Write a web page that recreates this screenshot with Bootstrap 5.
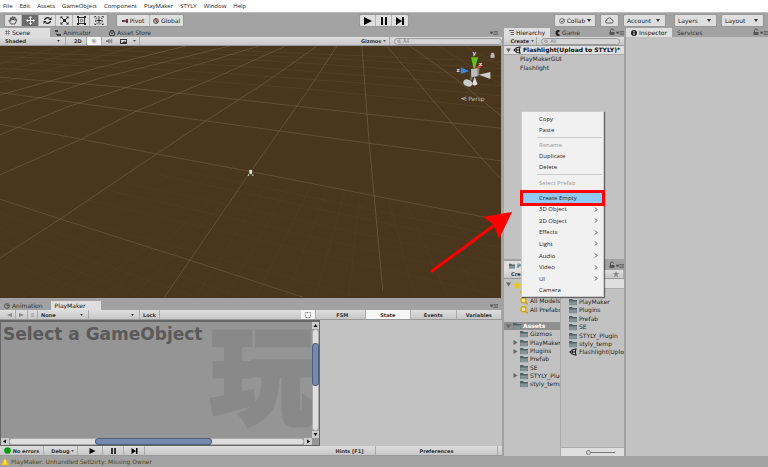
<!DOCTYPE html>
<html lang="en">
<head>
<meta charset="utf-8">
<meta name="viewport" content="width=device-width, initial-scale=1">
<title>Unity Editor</title>
<link href="https://cdn.jsdelivr.net/npm/bootstrap@5.3.0/dist/css/bootstrap.min.css" rel="stylesheet">
<style>
:root{--ui:"DejaVu Sans","Liberation Sans",sans-serif;--os:"Open Sans","Noto Sans",sans-serif}
body{font-family:var(--ui);font-size:6px;line-height:8px;color:#222;background:#a2a2a2;overflow:hidden}
button,select,input{font:inherit;color:inherit;border:0;padding:0;margin:0;background:none;border-radius:0;min-width:0;line-height:8px;white-space:nowrap}
select{appearance:none;background:no-repeat right 5px center/4px 3px url("data:image/svg+xml,%3Csvg xmlns='http://www.w3.org/2000/svg' viewBox='0 0 4 3'%3E%3Cpath d='M0 0h4L2 3z' fill='%23333'/%3E%3C/svg%3E")}
svg{display:block;flex:none}
.ic{width:8px;height:8px}
.menubar{background:#fff;height:12px;font-family:var(--os);color:#222;padding-left:3px;gap:7px}
.menubar a{color:inherit;text-decoration:none}
.toolbar-main{display:grid;grid-template-columns:1fr auto 1fr;height:16px;border-top:1px solid #bbb;padding:0 5px}
.tools{gap:10px}
.raised{background-color:#dedede;height:11px;border-radius:1px;box-shadow:0 0 0 1px #8a8a8a66;overflow:hidden}
.raised>button{display:flex;align-items:center;justify-content:center;height:11px;width:17px;border-right:1px solid #b4b4b4}
.raised>button:last-child{border-right:0}
.raised>button.on{background:#6c6c6c;color:#fff}
.raised.play>button{width:16px}
.raised>button.wide{width:33px;gap:2px}
.raised>button.collab{width:40px;gap:2px}
select.raised{padding:0 3px;width:41px}
.account-tools{gap:6px}
.workspace{display:grid;grid-template-columns:502fr 120fr 142fr;column-gap:2px;min-height:0}
.workspace>*{min-width:0;min-height:0}
.tabs-row{height:9px;color:#3a3a3a}
.tabs-row button{height:9px;padding:0 5px;display:flex;align-items:center;gap:2px;color:#333}
.tabs-row button.on{background:#dedede;color:#111}
.tabs-row button.scene-tab{padding-right:20px}
.strip{height:9px;background:linear-gradient(#dedede,#c6c6c6);font-size:5px;font-weight:bold;border-bottom:1px solid #999;color:#333}
.lower .strip{height:10px}
.strip>*{height:8px;display:flex;align-items:center;justify-content:center;border-right:1px solid #aaa}
.lower .strip>*{height:9px}
.strip select{display:block;padding-left:5px;text-align:left;background-size:3px 2px}
.strip .on{background:#f6f6f6}
.strip .tight{padding:0 3px}
.strip .key{width:21px}
.searchbox{border:1px solid #999!important;border-radius:5px;background:#d4d4d4;height:7px!important;padding:0 2px;color:#888;gap:1px}
.searchbox input{width:100%;font-size:5px;line-height:5px;height:5px;font-weight:normal}
.searchbox input::placeholder{color:#777;opacity:1}
.pane{background:#c2c2c2}
.scene{background:#49361d;flex:252 1 0;min-height:0;margin:0 1px 0 0}
.lower{flex:155 1 0;min-height:0;margin-top:3px}
.pm{display:grid;grid-template-columns:320fr 182fr;min-height:0}
.graph{background:#959595;border:1px solid #666;border-top-width:2px;display:grid;grid-template:1fr 7px/1fr 7px;min-height:0}
.graph-view{overflow:hidden;min-width:0;min-height:0}
.graph-title{font-size:17px;line-height:20px;font-weight:bold;color:#5a5a5a;margin:2px 0 0 2px;white-space:nowrap}
.glyph{position:absolute;right:-6px;top:-9px;font:900 108px/112px "Noto Sans CJK JP","Noto Sans CJK SC",sans-serif;color:#898989;-webkit-text-stroke:3px #898989}
.track-v,.track-h{background:#dedede;border:1px solid #aaa;border-radius:3px}
.thumb{background:#7489ab;border:1px solid #4d5f7d;border-radius:3px}
.tabs4{display:grid;grid-template-columns:repeat(4,1fr)}
.hier{flex:232 1 0;min-height:0}
.proj{flex:195 1 0;min-height:0;margin-top:2px}
.scene-name{height:9px;background:#dedede;font-weight:bold;font-size:6px;color:#111;padding-left:2px;gap:2px;border-bottom:1px solid #aaa}
.rows{display:grid;grid-auto-rows:1fr}
.rows>div{display:flex;align-items:center;gap:2px;white-space:nowrap;overflow:hidden;padding-left:16px;min-height:0}
.rows>.arrow{padding-left:9px}
.rows>.top{padding-left:2px}
.hrows{min-height:17px}
.tree{min-height:108px;border-right:1px solid #aaa;padding-top:1px;overflow:hidden}
.tree-rows{min-height:108px}
.tree .sel{background:#8f8f8f;color:#fff;font-weight:bold}
.files{min-height:67px}
.files>div{padding-left:8px}
.crumb{height:10px;background:#dedede;border-bottom:1px solid #aaa}
.split{display:grid;grid-template-columns:57fr 63fr}
.sizer{height:9px;background:#dedede;border-top:1px solid #aaa;padding-right:9px}
input[type=range]{appearance:none;width:29px;height:5px}
input[type=range]::-webkit-slider-runnable-track{height:1px;background:#777}
input[type=range]::-webkit-slider-thumb{appearance:none;width:5px;height:5px;margin-top:-2px;border-radius:50%;background:#ddd;border:1px solid #777}
.ctx{position:absolute;left:17px;top:83px;width:83px;background:#f1f1f1;border:1px solid #ccc;box-shadow:1px 1px 1px #0007;font-family:var(--os);padding-top:1px;z-index:5}
.ctx .group{display:grid;grid-auto-rows:1fr}
.ctx button{display:flex;align-items:center;justify-content:space-between;padding:0 5px 0 17px;text-align:left}
.ctx button:disabled{color:#999}
.ctx hr{margin:1px 1px 1px 15px;border-color:#ccc;opacity:1}
.g2{min-height:23px}.g3{min-height:34px}.g1{min-height:13px}.g9{min-height:104px}
.ctx .pick{background:#91c9f7;outline:3px solid #f00;outline-offset:-1px;z-index:1}
.pointer{position:absolute;left:-92px;top:99px;width:84px;height:64px}
.status{height:11px;color:#4d4719;padding-left:1px;gap:2px}
</style>
<script src="https://cdn.jsdelivr.net/npm/bootstrap@5.3.0/dist/js/bootstrap.bundle.min.js"></script>
</head>
<body class="vh-100 d-flex flex-column">
<svg width="0" height="0" class="position-absolute" aria-hidden="true">
<symbol id="folder" viewBox="0 0 8 8"><path d="M0 1h3l1 1h4v5H0z" fill="#52646a"/><path d="M0 3.500h8L7.500 7.300H.3z" fill="#82949a"/></symbol>
<symbol id="unity" viewBox="0 0 8 8"><path d="M7 1 4.200 1.500 1 4l3.200 2.500L7 7l-.8-3zM4 4h3M4 4 2.600 1.700M4 4 2.600 6.300" fill="none" stroke="#222" stroke-width="1.100"/></symbol>
<symbol id="lock" viewBox="0 0 8 8"><path d="M1.500 4h5v3h-5z" fill="#555"/><path d="M2.500 4V2.500a1.500 1.500 0 0 1 3 0" fill="none" stroke="#555"/></symbol>
<symbol id="opts" viewBox="0 0 8 8"><path d="M0 4h3L1.500 6zM3.500 3.500H8M3.500 5H8M3.500 6.500H8" fill="#555" stroke="#555" stroke-width=".7"/></symbol>
<symbol id="find" viewBox="0 0 8 8"><circle cx="3" cy="3.500" r="2" fill="none" stroke="#777"/><path d="m4.500 5 2 2" stroke="#777"/></symbol>
<symbol id="gold" viewBox="0 0 8 8"><circle cx="3.500" cy="3.300" r="2.600" fill="#eee09a" stroke="#d0a000" stroke-width="1.200"/><path d="m5.300 5.200 2.200 2.200" stroke="#d0a000" stroke-width="1.500"/></symbol>
<symbol id="star" viewBox="0 0 8 8"><path d="m4 0 1.200 2.700L8 3 5.900 4.900 6.500 8 4 6.400 1.500 8l.6-3.100L0 3l2.800-.3z"/></symbol>
<symbol id="open" viewBox="0 0 5 5"><path d="M0 .5h5L2.500 4.500z" fill="#666"/></symbol>
<symbol id="shut" viewBox="0 0 5 5"><path d="M.5 0v5L4.500 2.500z" fill="#666"/></symbol>
<symbol id="play" viewBox="0 0 8 8"><path d="M0 0v8l8-4z"/></symbol>
<symbol id="pause" viewBox="0 0 8 8"><path d="M1 0h2v8H1zM5 0h2v8H5z"/></symbol>
<symbol id="step" viewBox="0 0 8 8"><path d="M0 0v8l6-4zM6 0h2v8H6z"/></symbol>
<symbol id="chev" viewBox="0 0 4 5"><path d="m1 .5 2 2-2 2" fill="none" stroke="#333" stroke-width=".8"/></symbol>
</svg>

<nav class="menubar d-flex align-items-center flex-shrink-0">
<a href="#">File</a><a href="#">Edit</a><a href="#">Assets</a><a href="#">GameObject</a><a href="#">Component</a><a href="#">PlayMaker</a><a href="#">STYLY</a><a href="#">Window</a><a href="#">Help</a>
</nav>

<header class="toolbar-main align-items-center flex-shrink-0">
<div class="tools d-flex align-items-center">
<div class="raised d-flex">
<button aria-label="Hand"><svg width="10" height="9" viewBox="0 0 10 9"><path d="M3 8 .8 4.700l1-.5L3 5.200 2.300 2l.9-.3L4.200 4l0-3.200h1L5.500 4l.9-2.800.9.200L7 4.500l1.300-1.500.7.600L7 8z" fill="none" stroke="#333" stroke-width=".8"/></svg></button>
<button class="on" aria-label="Move"><svg width="9" height="9" viewBox="0 0 9 9"><path d="M4.500 1v7M1 4.500h7" stroke="#fff"/><path d="m4.500 0 1.600 2H2.900zM4.500 9 2.900 7h3.200zM0 4.500 2 2.900v3.200zM9 4.500 7 6.100V2.900z" fill="#fff"/></svg></button>
<button aria-label="Rotate"><svg width="9" height="9" viewBox="0 0 9 9"><path d="M1.500 4a3 3 0 0 1 5-1.500M7.500 5a3 3 0 0 1-5 1.500" fill="none" stroke="#222" stroke-width="1.300"/><path d="M5.500 4h3V1zM3.500 5h-3v3z" fill="#222"/></svg></button>
<button aria-label="Scale"><svg width="9" height="9" viewBox="0 0 9 9"><path d="m1 1 7 7M8 1 1 8" stroke="#333"/><path d="M3 3h3v3H3zM.5.500h2.500l-2.500 2.500zM8.500.500v2.500L6 .5zM.5 8.500V6L3 8.500zM8.500 8.500H6L8.500 6z" fill="#222"/></svg></button>
<button aria-label="Rect"><svg width="9" height="9" viewBox="0 0 9 9"><path d="M1.500 1.500h6v6h-6z" fill="none" stroke="#333"/><circle cx="4.500" cy="4.500" r="1.200" fill="none" stroke="#333" stroke-width=".7"/><path d="M0 0h2v2H0zM7 0h2v2H7zM0 7h2v2H0zM7 7h2v2H7z" fill="#222"/></svg></button>
<button aria-label="Transform"><svg width="10" height="9" viewBox="0 0 10 9"><circle cx="5" cy="4.500" r="3.500" fill="none" stroke="#333" stroke-dasharray="2 1"/><path d="M5 2v5M2.500 4.500h5" stroke="#222"/><path d="M.5 0h2L.5 2zM9.500 0v2l-2-2zM.5 9V7l2 2zM9.500 9h-2l2-2z" fill="#222"/></svg></button>
</div>
<div class="raised d-flex">
<button class="wide"><svg width="6" height="6" viewBox="0 0 6 6"><path d="M0 2h2v2H0zM4 1h2v4H4z" fill="#444"/><path d="M2 2h2v2H2z" fill="#c33"/></svg>Pivot</button>
<button class="wide"><svg width="6" height="6" viewBox="0 0 6 6"><circle cx="3" cy="3" r="2.400" fill="#aaa" stroke="#555"/><path d="M3 3V0M3 3l2 2" stroke="#b33"/></svg>Global</button>
</div>
</div>
<div class="raised play d-flex">
<button aria-label="Play"><svg class="ic"><use href="#play"/></svg></button>
<button aria-label="Pause"><svg class="ic"><use href="#pause"/></svg></button>
<button aria-label="Step"><svg class="ic"><use href="#step"/></svg></button>
</div>
<div class="account-tools d-flex align-items-center justify-content-end">
<div class="raised"><button class="collab"><svg width="6" height="6" viewBox="0 0 6 6"><circle cx="3" cy="3" r="2.400" fill="none" stroke="#555" stroke-width=".8"/><path d="m2 3 1 1 2.500-3" fill="none" stroke="#555" stroke-width=".8"/></svg>Collab<svg width="4" height="3" viewBox="0 0 4 3"><path d="M0 0h4L2 3z" fill="#333"/></svg></button></div>
<div class="raised"><button aria-label="Cloud"><svg width="9" height="7" viewBox="0 0 9 7"><path d="M2 6a1.500 1.500 0 0 1 0-3 2.300 2.300 0 0 1 4.500-.5A1.800 1.800 0 0 1 7 6z" fill="none" stroke="#444" stroke-width=".8"/></svg></button></div>
<select class="raised me-1" aria-label="Account"><option>Account</option></select>
<select class="raised" aria-label="Layers"><option>Layers</option></select>
<select class="raised" aria-label="Layout"><option>Layout</option></select>
</div>
</header>

<main class="workspace flex-grow-1">
<section class="d-flex flex-column">
<div class="tabs-row d-flex flex-shrink-0">
<button class="on scene-tab"><svg width="5" height="5" viewBox="0 0 5 5"><path d="M1.500 0v5M3.500 0v5M0 1.500h5M0 3.500h5" stroke="#777" stroke-width=".7"/></svg>Scene</button>
<button><svg width="6" height="6" viewBox="0 0 6 6"><path d="M0 0h3v2H0zM2 4h4v2H2zM1 2v3h1" fill="#444"/></svg>Animator</button>
<button class="ms-2"><svg width="6" height="6" viewBox="0 0 6 6"><path d="M.5 2h5v3.500h-5zM1.500 2V.5h3V2M2 3.500h2" fill="none" stroke="#444"/></svg>Asset Store</button>
<svg class="ic ms-auto me-1"><use href="#opts"/></svg>
</div>
<div class="strip d-flex flex-shrink-0 align-items-center">
<select style="width:66px" aria-label="Draw mode"><option>Shaded</option></select>
<button class="px-1 ms-1">2D</button>
<button class="on px-1" aria-label="Lighting"><svg width="6" height="6" viewBox="0 0 6 6"><circle cx="3" cy="3" r="1.500" fill="#aaa"/><path d="M3 0v6M0 3h6M1 1l4 4M5 1 1 5" stroke="#aaa" stroke-width=".6"/></svg></button>
<button class="px-1 border-0" aria-label="Audio"><svg width="7" height="6" viewBox="0 0 8 6"><path d="M0 2h2l2-2v6L2 4H0z" fill="#777"/><path d="M5 1.500v3M6.500.500v5" stroke="#777"/></svg></button>
<button class="tight border-0" aria-label="Effects"><svg width="7" height="5" viewBox="0 0 7 5"><path d="M0 0h7v5H0z" fill="#333"/><path d="M1 1h5v2L4 2 2 4H1z" fill="#ddd"/></svg></button>
<button class="tight" aria-label="Effects menu"><svg width="3" height="2" viewBox="0 0 3 2"><path d="M0 0h3L1.500 2z" fill="#555"/></svg></button>
<button class="ms-auto tight">Gizmos&nbsp;<svg width="3" height="2" viewBox="0 0 3 2"><path d="M0 0h3L1.500 2z" fill="#555"/></svg></button>
<label class="searchbox ms-1" style="width:108px"><svg width="5" height="5"><use href="#find"/></svg><input type="text" placeholder="All" aria-label="Search scene"></label>
</div>
<div class="scene">
<svg width="100%" height="100%" viewBox="0 18 1509 757" preserveAspectRatio="none" aria-label="Scene view">
<g fill="none" stroke="#a79a82" stroke-opacity=".27" stroke-width="3">
<path d="M495 773 755 395 925 155 1015 18M0 655 185 535 475 340 620 243 800 127 955 18M0 405 245 298 410 214 645 115 860 18M0 285 200 202 500 103 780 18M0 212 300 115 690 18M0 165 300 82 560 18M1153 755 1127 468 1112 310 1090 18M1512 420 1450 355 1290 165 1165 18M1512 230 1380 122 1235 18"/>
<path d="M0 478 180 537 567 660 915 773M0 253 245 298 475 343 755 395 1127 468 1450 530 1509 541M0 158 190 183 410 214 620 243 840 273 1112 310 1450 355 1509 363M0 112 350 140 730 180 1100 222 1512 265" stroke-opacity=".24"/>
<path d="M0 85 450 110 900 145 1512 206M0 65 600 95 1100 130 1512 168M0 49 700 77 1512 138M0 36 800 62 1512 109M300 30 950 53 1512 86M600 27 1512 65M0 128 420 18M0 98 290 18M0 72 180 18M1512 135 1320 18M1512 80 1400 18" stroke-opacity=".14" stroke-width="2"/>
</g>
<g fill="none" stroke="#a79a82" stroke-opacity=".07" stroke-width="2">
<path d="M0 520 730 773M0 565 590 773M0 610 450 773M0 660 310 773M60 495 1090 773M240 475 1509 770M320 450 1509 720M380 430 1509 672M480 405 1509 625M560 395 1509 590M70 773 330 585M145 773 410 580M225 773 480 600M310 773 660 460M400 773 700 460M590 773 820 410M680 773 880 420M770 773 940 430M860 773 990 440M950 773 1040 450M1050 773 1085 460M1250 773 1170 475M1350 773 1220 485M1450 773 1270 495M1509 700 1330 505"/>
</g>
<g>
<path d="M1419 52h21l-9 33h-5z" fill="#64c01e"/><path d="m1388 82 25 12-25 7z" fill="#3c83ea"/><path d="m1434 86 8-12 7 5-8 13z" fill="#e43c20"/><path d="m1442 104 35-8v21z" fill="#ccc"/><path d="m1419 87 20-2v24l-20 3z" fill="#bbb"/><path d="m1439 85 5 3-1 18-4 3z" fill="#888"/><path d="m1417 108 8 5-8 12z" fill="#777"/><ellipse cx="1409" cy="129" rx="14" ry="10" fill="#ccc" transform="rotate(25 1409 129)"/><path d="m1430 110 8 22q-9 10-16 0z" fill="#ddd"/>
<g fill="#ddd" font-family="DejaVu Sans" font-weight="bold" font-size="17"><text x="1423" y="45">y</text><text x="1375" y="95">z</text><text x="1442" y="77">x</text></g>
<text x="1410" y="183" fill="#bbb" font-family="DejaVu Sans" font-size="18">Persp</text>
<path d="m1405 171-15 5 15 6m-15-6h15" fill="none" stroke="#bbb" stroke-width="2"/><path d="M1478 44h11v9h-11zM1480 44v-5h7v5" fill="#bbb" stroke="#bbb"/>
<path d="M750 392q5-5 10 0l-2 11h-6zM748 401l-2 7h5zM762 401l2 7h-5z" fill="#ddd"/>
</g>
</svg>
</div>
<div class="lower d-flex flex-column">
<div class="tabs-row d-flex flex-shrink-0">
<button class="px-1"><svg width="6" height="6" viewBox="0 0 6 6"><circle cx="3" cy="3" r="2.400" fill="none" stroke="#444" stroke-width=".8"/><path d="M3 1v2h2" fill="none" stroke="#444" stroke-width=".7"/></svg>Animation</button>
<button class="on ms-1 pe-3 ps-1">PlayMaker</button>
<svg class="ic ms-auto me-1"><use href="#opts"/></svg>
</div>
<div class="pm flex-grow-1">
<div class="d-flex flex-column" style="min-height:0;min-width:0">
<div class="strip d-flex flex-shrink-0">
<button class="tight ms-1" aria-label="Back"><svg width="5" height="4" viewBox="0 0 5 4"><path d="M5 0v4L0 2z" fill="#888"/></svg></button>
<button class="tight" aria-label="Forward"><svg width="5" height="4" viewBox="0 0 5 4"><path d="M0 0v4l5-2z" fill="#888"/></svg></button>
<button class="tight" aria-label="Recent"><svg width="3" height="4" viewBox="0 0 3 4"><path d="M0 .5h3M0 2h3M0 3.500h3" stroke="#999" stroke-width=".7"/></svg></button>
<select style="width:51px" class="tight" aria-label="Object"><option>None</option></select>
<select style="width:51px" aria-label="State machine"><option></option></select>
<button class="tight">Lock</button>
<button class="on ms-auto px-1 me-1" aria-label="Minimap"><svg width="6" height="6" viewBox="0 0 6 6"><path d="M.5.500h5v5h-5z" fill="none" stroke="#888" stroke-dasharray="1 .5"/></svg></button>
</div>
<div class="graph flex-grow-1">
<div class="graph-view position-relative"><div class="glyph" lang="ja">玩</div><h1 class="graph-title position-relative">Select a GameObject</h1></div>
<div class="d-flex flex-column align-items-stretch"><svg width="7" height="7" viewBox="0 0 7 7"><path d="M0 0h7v7H0z" fill="#ccc"/><path d="m3.500 2 2 3h-4z"/></svg><div class="track-v flex-grow-1 d-flex flex-column"><div style="flex:14"></div><div class="thumb" style="flex:43;margin:0 -1px"></div><div style="flex:46"></div></div><svg width="7" height="7" viewBox="0 0 7 7"><path d="M0 0h7v7H0z" fill="#ccc"/><path d="m3.500 5 2-3h-4z"/></svg></div>
<div class="d-flex"><svg width="8" height="7" viewBox="0 0 8 7"><path d="M0 0h8v7H0z" fill="#ccc"/><path d="m2 3.500 3-2v4z"/></svg><div class="track-h flex-grow-1 d-flex"><div style="flex:86"></div><div class="thumb" style="flex:117;margin:-1px 0"></div><div style="flex:93"></div></div><svg width="8" height="7" viewBox="0 0 8 7"><path d="M0 0h8v7H0z" fill="#ccc"/><path d="m6 3.500-3-2v4z"/></svg></div>
<div></div>
</div>
<div class="strip d-flex flex-shrink-0">
<button class="ps-1 pe-1"><svg width="7" height="7" viewBox="0 0 7 7"><circle cx="3.500" cy="3.500" r="3.300" fill="#0b9a14"/></svg>&nbsp;No errors</button>
<button class="tight ms-1">Debug&nbsp;<svg width="3" height="2" viewBox="0 0 3 2"><path d="M0 0h3L1.500 2z" fill="#555"/></svg></button>
<button class="key ms-1" aria-label="Play graph"><svg width="7" height="6"><use href="#play"/></svg></button>
<button class="key" aria-label="Pause graph"><svg width="7" height="6"><use href="#pause"/></svg></button>
<button class="key" aria-label="Step graph"><svg width="7" height="6"><use href="#step"/></svg></button>
</div>
</div>
<div class="pane d-flex flex-column">
<div class="strip tabs4"><button>FSM</button><button class="on">State</button><button>Events</button><button>Variables</button></div>
<div class="strip d-flex mt-auto px-1"><button style="width:52px">Hints [F1]</button><button class="flex-grow-1">Preferences</button></div>
</div>
</div>
</div>
</section>

<section class="d-flex flex-column">
<div class="hier d-flex flex-column position-relative pane">
<div class="tabs-row d-flex flex-shrink-0" style="background:#a2a2a2">
<button class="on"><svg width="5" height="5" viewBox="0 0 5 5"><path d="M0 .5h5M1.500 2.500H5M1.500 4.500H5" stroke="#444" stroke-width=".8"/></svg>Hierarchy</button>
<button><svg width="5" height="6" viewBox="0 0 5 6"><path d="M5 1A2.500 3 0 1 0 5 5L2.500 3z" fill="#222"/></svg>Game</button>
<svg class="ic ms-auto"><use href="#lock"/></svg><svg class="ic"><use href="#opts"/></svg>
</div>
<div class="strip d-flex flex-shrink-0 align-items-center">
<button class="tight ms-1">Create&nbsp;<svg width="3" height="2" viewBox="0 0 3 2"><path d="M0 0h3L1.500 2z" fill="#555"/></svg></button>
<label class="searchbox ms-1 me-1 flex-grow-1"><svg width="5" height="5"><use href="#find"/></svg><input type="text" placeholder="All" aria-label="Search hierarchy"></label>
</div>
<div class="scene-name d-flex align-items-center overflow-hidden text-nowrap flex-shrink-0"><svg width="5" height="5"><use href="#open"/></svg><svg class="ic"><use href="#unity"/></svg>Flashlight(Upload to STYLY)*</div>
<div class="rows hrows"><div>PlayMakerGUI</div><div>Flashlight</div></div>
<div class="ctx" role="menu">
<div class="group g2"><button>Copy</button><button>Paste</button></div><hr>
<div class="group g3"><button disabled>Rename</button><button>Duplicate</button><button>Delete</button></div><hr>
<div class="group g1"><button disabled>Select Prefab</button></div><hr>
<div class="group g9"><button class="pick">Create Empty</button>
<button>3D Object<svg width="4" height="5"><use href="#chev"/></svg></button>
<button>2D Object<svg width="4" height="5"><use href="#chev"/></svg></button>
<button>Effects<svg width="4" height="5"><use href="#chev"/></svg></button>
<button>Light<svg width="4" height="5"><use href="#chev"/></svg></button>
<button>Audio<svg width="4" height="5"><use href="#chev"/></svg></button>
<button>Video<svg width="4" height="5"><use href="#chev"/></svg></button>
<button>UI<svg width="4" height="5"><use href="#chev"/></svg></button>
<button>Camera</button></div>
<svg class="pointer" viewBox="0 0 84 64"><path d="M2 60 66 13" stroke="#f00" stroke-width="3" stroke-linecap="round"/><path d="M82 1 69 28 64 14 53 6z" fill="#f00"/></svg>
</div>
</div>
<div class="proj d-flex flex-column">
<div class="tabs-row d-flex flex-shrink-0"><button class="on"><svg width="6" height="6"><use href="#folder"/></svg>Pr</button><svg class="ic ms-auto"><use href="#lock"/></svg><svg class="ic"><use href="#opts"/></svg></div>
<div class="strip d-flex flex-shrink-0"><button class="tight ms-1 border-0">Cre</button><button class="ms-auto px-1" aria-label="Save search"><svg width="6" height="6" fill="#888"><use href="#star"/></svg></button></div>
<div class="split flex-grow-1 pane">
<div class="tree"><div class="rows tree-rows">
<div class="top"><svg width="5" height="5"><use href="#open"/></svg><svg class="ic" fill="#f5c400"><use href="#star"/></svg></div>
<div><svg class="ic"><use href="#gold"/></svg></div><div><svg class="ic"><use href="#gold"/></svg>All Models</div><div><svg class="ic"><use href="#gold"/></svg>All Prefabs</div><div></div>
<div class="top sel"><svg width="5" height="5"><use href="#open"/></svg><svg class="ic"><use href="#folder"/></svg>Assets</div>
<div><svg class="ic"><use href="#folder"/></svg>Gizmos</div>
<div class="arrow"><svg width="5" height="5"><use href="#shut"/></svg><svg class="ic"><use href="#folder"/></svg>PlayMaker</div>
<div class="arrow"><svg width="5" height="5"><use href="#shut"/></svg><svg class="ic"><use href="#folder"/></svg>Plugins</div>
<div><svg class="ic"><use href="#folder"/></svg>Prefab</div>
<div><svg class="ic"><use href="#folder"/></svg>SE</div>
<div class="arrow"><svg width="5" height="5"><use href="#shut"/></svg><svg class="ic"><use href="#folder"/></svg>STYLY_Plugin</div>
<div><svg class="ic"><use href="#folder"/></svg>styly_temp</div>
</div></div>
<div class="d-flex flex-column" style="min-width:0">
<div class="crumb"></div>
<div class="rows files"><div><svg class="ic"><use href="#folder"/></svg></div><div><svg class="ic"><use href="#folder"/></svg>PlayMaker</div><div><svg class="ic"><use href="#folder"/></svg>Plugins</div><div><svg class="ic"><use href="#folder"/></svg>Prefab</div><div><svg class="ic"><use href="#folder"/></svg>SE</div><div><svg class="ic"><use href="#folder"/></svg>STYLY_Plugin</div><div><svg class="ic"><use href="#folder"/></svg>styly_temp</div><div><svg class="ic"><use href="#unity"/></svg>Flashlight(Upload to STYLY)</div></div>
<div class="sizer mt-auto d-flex align-items-center justify-content-end"><input type="range" value="0" aria-label="Icon size"></div>
</div>
</div>
</div>
</section>

<section class="d-flex flex-column">
<div class="tabs-row d-flex flex-shrink-0">
<button class="on"><svg width="6" height="6" viewBox="0 0 6 6"><circle cx="3" cy="3" r="3" fill="#222"/><path d="M3 1v1M3 2.500V5" stroke="#fff"/></svg>Inspector</button>
<button>Services</button>
<svg class="ic ms-auto"><use href="#lock"/></svg><svg class="ic"><use href="#opts"/></svg>
</div>
<div class="pane flex-grow-1"></div>
</section>
</main>

<footer class="status d-flex align-items-center flex-shrink-0"><svg width="8" height="7" viewBox="0 0 8 7"><path d="M4 0 8 7H0z" fill="#f3c800"/><path d="M4 2.200v2.300M4 5.200v1" stroke="#fff"/></svg>PlayMaker: Unhandled SetDirty: Missing Owner</footer>
</body>
</html>
